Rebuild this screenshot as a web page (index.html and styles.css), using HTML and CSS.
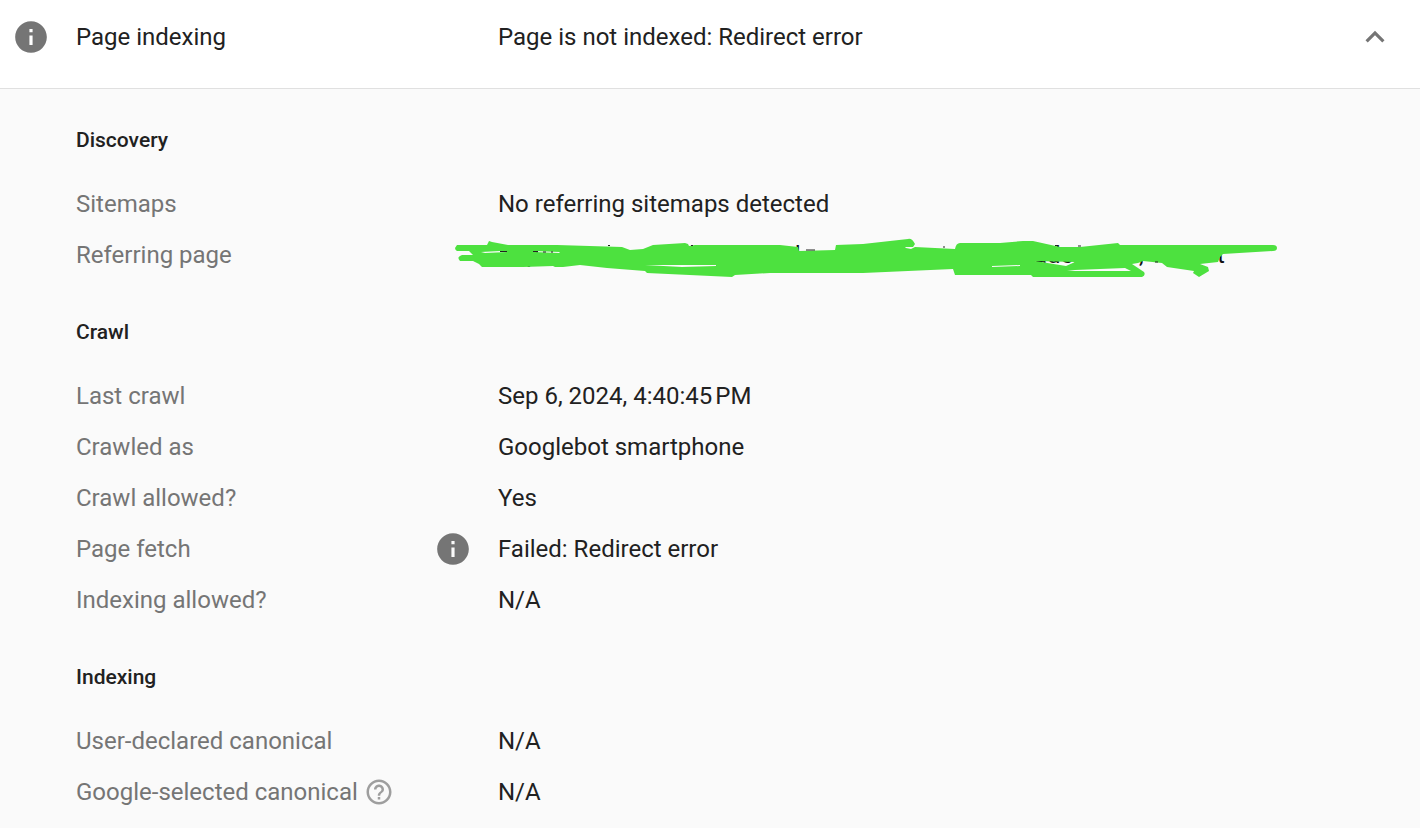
FILE: index.html
```html
<!DOCTYPE html>
<html lang="en">
<head>
<meta charset="utf-8">
<meta name="viewport" content="width=device-width, initial-scale=1">
<title>Page indexing</title>
<link rel="stylesheet" href="styles.css">
</head>
<body>
<svg class="sprite" aria-hidden="true">
  <symbol id="info" viewBox="0 0 24 24"><path d="M12 2C6.48 2 2 6.48 2 12s4.480 10 10 10 10-4.480 10-10S17.520 2 12 2zm1 15h-2v-6h2v6zm0-8h-2V7h2v2z"/></symbol>
</svg>
<main class="panel">
  <button class="summary" type="button" aria-expanded="true" aria-controls="details">
    <svg class="icon summary-icon" aria-hidden="true"><use href="#info"/></svg>
    <span class="summary-title">Page indexing</span>
    <span class="summary-status">Page is not indexed: Redirect error</span>
    <svg class="icon" viewBox="0 0 24 24" aria-hidden="true"><path d="M12 8l-6 6 1.410 1.410L12 10.830l4.590 4.580L18 14z"/></svg>
  </button>
  <div class="details" id="details">
    <section class="group">
      <h2 class="group-title">Discovery</h2>
      <dl class="rows">
        <div class="row"><dt class="label">Sitemaps</dt><dd class="value">No referring sitemaps detected</dd></div>
        <div class="row"><dt class="label">Referring page</dt>
          <dd class="value redacted">
            <svg class="scribble" viewBox="450 236 830 44" role="img" aria-label="Redacted address">
              <g class="remnant">
                <text x="526" y="262">p</text>
                <text x="787" y="263">d</text>
                <text x="1034" y="263">ade,</text>
                <text x="1139" y="263">,</text>
                <text x="1217" y="263">t</text>
              </g>
              <path class="ink" d="M455 248L457 245H487L489 241L492 242L508 245H557L622 247L630 250L643 249L653 245L685 243L688 244L689 246L695 245H780L798 247L799 251L835 250L836 245L863 244L908 239Q912 238 915 244L913 247L905 247L906 248L911 249L915 247L955 249Q956 243 960 243H1000L1023 241H1033L1060 247H1080L1118 243L1120 245H1273Q1277 245 1277 248Q1277 251 1273 251L1223 254L1220 257L1218 262L1200 264L1208 267L1209 271L1199 277L1193 273L1194 271L1167 267L1162 263L1143 261L1138 263L1132 264L1144 272Q1146 275 1142 277H1033L1031 275H955L953 269L863 273H770L735 275L732 277L647 273L645 271L607 268L580 265L563 267H555L553 266L523 267H482L479 264L473 261H460Q456 257 462 255L473 255L469 251H457Q455 250 455 248ZM481 252L500 251L507 252L485 253ZM533 251L560 252L559 253L534 252ZM645 265L716 265L716 266L682 267ZM992 266L1020 265V266L992 267ZM1067 271L1075 270L1125 268L1131 271ZM1035 261L1075 262L1066 266Z"/>
              <path class="speck" d="M500 251.500H507M533 251.500H538M543 252H546M551 252H553M608 245.500H610M691 245.500H693M806 250H815M943 247H945M1055 245.500H1057M1078 246H1081M1155 262H1158"/>
            </svg>
          </dd>
        </div>
      </dl>
    </section>
    <section class="group">
      <h2 class="group-title">Crawl</h2>
      <dl class="rows">
        <div class="row"><dt class="label">Last crawl</dt><dd class="value">Sep 6, 2024, 4:40:45&#8239;PM</dd></div>
        <div class="row"><dt class="label">Crawled as</dt><dd class="value">Googlebot smartphone</dd></div>
        <div class="row"><dt class="label">Crawl allowed?</dt><dd class="value">Yes</dd></div>
        <div class="row"><dt class="label">Page fetch</dt><dd class="value with-icon"><svg class="icon" aria-hidden="true"><use href="#info"/></svg><span>Failed: Redirect error</span></dd></div>
        <div class="row"><dt class="label">Indexing allowed?</dt><dd class="value">N/A</dd></div>
      </dl>
    </section>
    <section class="group">
      <h2 class="group-title">Indexing</h2>
      <dl class="rows">
        <div class="row"><dt class="label">User-declared canonical</dt><dd class="value">N/A</dd></div>
        <div class="row"><dt class="label">Google-selected canonical
          <button class="help" type="button" aria-label="Help"><svg class="help-icon" viewBox="0 0 24 24" aria-hidden="true"><path d="M11 18h2v-2h-2v2zm1-16C6.480 2 2 6.480 2 12s4.480 10 10 10 10-4.480 10-10S17.520 2 12 2zm0 18c-4.410 0-8-3.590-8-8s3.590-8 8-8 8 3.590 8 8-3.590 8-8 8zm0-14c-2.210 0-4 1.790-4 4h2c0-1.100.9-2 2-2s2 .9 2 2c0 2-3 1.750-3 5h2c0-2.250 3-2.500 3-5 0-2.210-1.790-4-4-4z"/></svg></button></dt><dd class="value">N/A</dd></div>
      </dl>
    </section>
  </div>
</main>
</body>
</html>
```
FILE: styles.css
```css
* { box-sizing: border-box; }

body {
  margin: 0;
  background: #fafafa;
  color: #212121;
  font-family: Roboto, "Liberation Sans", sans-serif;
  font-size: 24px;
  line-height: 32px;
}

.sprite { display: none; }

.icon {
  display: block;
  flex: none;
  width: 38px;
  height: 38px;
  fill: #757575;
}

.summary {
  display: grid;
  grid-template-columns: 64px 422px 1fr 38px;
  align-items: center;
  width: 100%;
  padding: 18px 26px 32px 12px;
  border: 0;
  border-bottom: 1px solid #e0e0e0;
  background: #fff;
  color: inherit;
  font: inherit;
  text-align: left;
  cursor: pointer;
}

.details { padding: 32px 32px 0 76px; }

.group { margin-bottom: 42px; }

.group:last-child { margin-bottom: 0; }

.group-title {
  margin: 0 0 29px;
  font-size: 21px;
  font-weight: 500;
  line-height: 38px;
}

.rows {
  display: grid;
  gap: 19px;
  margin: 0;
}

.row {
  display: grid;
  grid-template-columns: 422px 1fr;
  align-items: center;
}

.label {
  display: flex;
  align-items: center;
  gap: 6px;
  color: #757575;
}

.value {
  position: relative;
  min-height: 32px;
  margin: 0;
}

.with-icon .icon {
  position: absolute;
  top: -3px;
  left: -64px;
}

.help {
  padding: 0;
  border: 0;
  background: none;
  cursor: pointer;
}

.help-icon {
  display: block;
  width: 30px;
  height: 30px;
  fill: #9e9e9e;
}

.scribble {
  position: absolute;
  top: -3px;
  left: -48px;
  width: 830px;
  height: 44px;
}

.ink {
  fill: #4de13f;
  fill-rule: evenodd;
}

.remnant { fill: #111; }

.speck {
  fill: none;
  stroke: #222;
  stroke-width: 1;
}
```
